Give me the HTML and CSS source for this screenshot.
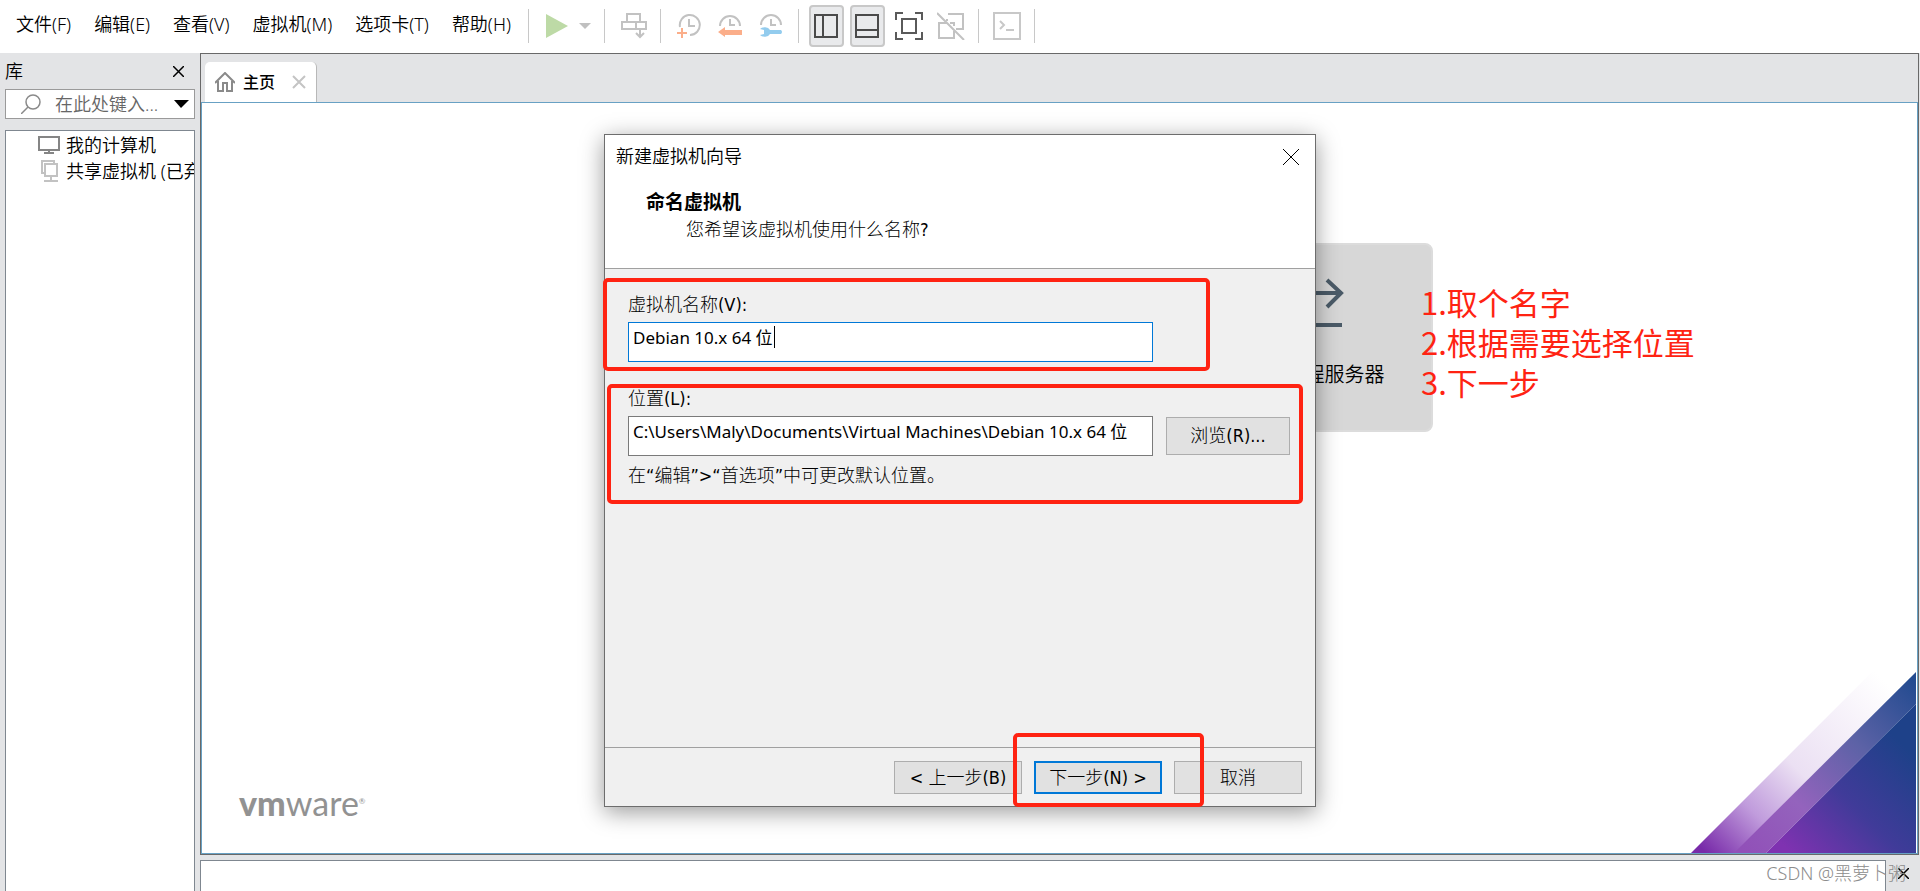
FILE: index.html
```
<!DOCTYPE html>
<html lang="zh-CN">
<head>
  <meta charset="UTF-8">
  <title>新建虚拟机向导</title>
  <link rel="stylesheet" href="styles.css">
</head>
<body>
  <header class="menubar">
    <nav class="menus">
      <button>文件(F)</button>
      <button>编辑(E)</button>
      <button>查看(V)</button>
      <button>虚拟机(M)</button>
      <button>选项卡(T)</button>
      <button>帮助(H)</button>
    </nav>
    <div class="tools play-tools">
      <button aria-label="启动"><svg width="22" height="24"><path d="M0 0L22 12L0 24Z" fill="#bddaa6"/></svg></button>
      <button aria-label="电源选项"><svg width="12" height="6"><path d="M0 0H12L6 6Z" fill="#c0c0c0"/></svg></button>
    </div>
    <div class="tools send-tools">
      <button aria-label="发送按键">
        <svg width="26" height="26" fill="none" stroke="#c2c2c2" stroke-width="2">
          <path d="M6 8V1H19V8M1 9H25V16H1ZM15 9V16M19 16V24M15 20L19 24L23 20"/>
        </svg>
      </button>
    </div>
    <!-- 快照 -->
    <div class="tools snap-tools">
      <button aria-label="拍摄快照">
        <svg width="24" height="26" fill="none" stroke="#c2c2c2" stroke-width="2">
          <path d="M3 14A10 10 0 1 1 13 22M12 6V13H18"/><path d="M5 15V25M0 20H10" stroke="#fbae8a"/>
        </svg>
      </button>
      <button aria-label="恢复快照">
        <svg width="24" height="26" fill="none" stroke="#c2c2c2" stroke-width="2">
          <path d="M2 13A10 10 0 1 1 22 13M12 6V12H17"/><path d="M0 19L7 14V17H24V22H7V24Z" fill="#fbae8a" stroke="none"/>
        </svg>
      </button>
      <button aria-label="管理快照">
        <svg width="24" height="26" fill="none" stroke="#c2c2c2" stroke-width="2">
          <path d="M2 12A10 10 0 1 1 22 12M12 6V12H17"/><path d="M1 16L5 17V21L1 22A6 5 0 0 0 11 21H22Q24 19 22 17H11A6 5 0 0 0 1 16Z" fill="#93ccee" stroke="none"/>
        </svg>
      </button>
    </div>
    <div class="tools view-tools">
      <button class="pressed" aria-label="显示库"><svg width="24" height="24" fill="none" stroke="#4a4a4a" stroke-width="2"><path d="M1 1H23V23H1ZM9 1V23"/></svg></button>
      <button class="pressed" aria-label="显示缩略图"><svg width="24" height="24" fill="none" stroke="#4a4a4a" stroke-width="2"><path d="M1 1H23V23H1ZM1 16H23"/></svg></button>
      <button aria-label="全屏"><svg width="28" height="28" fill="none" stroke="#5a5a5a" stroke-width="2"><path d="M1 8V1H8M20 1H27V8M27 20V27H20M8 27H1V20M7 7H21V21H7Z"/></svg></button>
      <button aria-label="Unity"><svg width="28" height="28" fill="none" stroke="#c2c2c2" stroke-width="2"><path d="M11 2H26V17H19M10 11H2V26H17V19M10 9V7M13 11H17V14M0 1L27 28"/></svg></button>
    </div>
    <div class="tools console-tools">
      <button aria-label="控制台"><svg width="28" height="28" fill="none" stroke="#c8c8c8" stroke-width="2"><path d="M1 1H27V27H1ZM7 9L11 13L7 17M13 18H21"/></svg></button>
    </div>
  </header>

  <div class="workspace">
    <aside class="library">
      <div class="library-head">
        <span>库</span>
        <button aria-label="关闭库"><svg width="11" height="11" stroke="#000" stroke-width="1.5"><path d="M0 0L11 11M11 0L0 11"/></svg></button>
      </div>
      <div class="search">
        <svg width="20" height="20" fill="none" stroke="#8a8a8a" stroke-width="1.5"><circle cx="12" cy="8" r="7"/><path d="M7 13L0 20"/></svg>
        <input type="text" aria-label="搜索" placeholder="在此处键入...">
        <button aria-label="搜索选项"><svg width="15" height="8"><path d="M0 0H15L7 8Z"/></svg></button>
      </div>
      <ul class="tree">
        <li>
          <svg width="22" height="18" fill="none" stroke="#858585" stroke-width="2"><path d="M1 1H21V14H1ZM11 14V17M6 17H16"/></svg>
          我的计算机
        </li>
        <li>
          <svg width="22" height="22" fill="none" stroke="#c2c2c2" stroke-width="2"><path d="M7 4H19V16H7ZM7 13H4V1H16V4M13 16V20M6 21H20"/></svg>
          共享虚拟机 (已弃用)
        </li>
      </ul>
    </aside>

    <div class="right">
      <main class="main">
        <div class="tabs">
          <div class="tab">
            <svg width="20" height="20" fill="none" stroke="#8a8a8a" stroke-width="2"><path d="M0 11L10 1L20 11M3 9V19H8V11H12V19H17V9"/></svg>
            <span>主页</span>
            <button aria-label="关闭标签"><svg width="14" height="14" stroke="#c4c4c4" stroke-width="2"><path d="M1 1L13 13M13 1L1 13"/></svg></button>
          </div>
        </div>
        <div class="home">
          <div class="cards">
            <button class="card">
              <svg width="60" height="50" fill="none" stroke="#4b5b68" stroke-width="4"><path d="M2 15H56M42 2L56 15L42 29M2 47H57"/></svg>
              <span>连接远程服务器</span>
            </button>
          </div>
          <div class="home-foot">
            <div class="logo"><b>vm</b>ware<sup>®</sup></div>
            <svg class="corner" width="240" height="212">
              <defs>
                <linearGradient id="fade" gradientUnits="userSpaceOnUse" x1="30" y1="212" x2="205" y2="37">
                  <stop offset="0" stop-color="#782aa9"/>
                  <stop offset=".25" stop-color="#c09bdc"/>
                  <stop offset=".5" stop-color="#ebe0f3"/>
                  <stop offset="1" stop-color="#fff"/>
                </linearGradient>
                <linearGradient id="band" gradientUnits="userSpaceOnUse" x1="70" y1="212" x2="240" y2="42">
                  <stop offset="0" stop-color="#9150b8"/>
                  <stop offset=".3" stop-color="#9463bd"/>
                  <stop offset=".65" stop-color="#5c62a6"/>
                  <stop offset="1" stop-color="#234b90"/>
                </linearGradient>
                <linearGradient id="deep" gradientUnits="userSpaceOnUse" x1="115" y1="212" x2="225" y2="102">
                  <stop offset="0" stop-color="#7f32b1"/>
                  <stop offset=".5" stop-color="#403b99"/>
                  <stop offset="1" stop-color="#1e4189"/>
                </linearGradient>
              </defs>
              <path d="M15 212L227 0H240V31L59 212Z" fill="url(#fade)"/>
              <path d="M58 212L240 31V63L90 212Z" fill="url(#band)"/>
              <path d="M90 212L240 63V212Z" fill="url(#deep)"/>
            </svg>
          </div>
        </div>
      </main>
      <div class="thumbs">
        <div class="thumbs-list"></div>
        <button aria-label="关闭缩略图"><svg width="11" height="11" stroke="#000" stroke-width="1.5"><path d="M0 0L11 11M11 0L0 11"/></svg></button>
      </div>
    </div>
  </div>

  <div class="overlay">
    <form class="dialog">
      <div class="dialog-head">
        <div class="titlebar">
          <span>新建虚拟机向导</span>
          <button type="button" aria-label="关闭"><svg width="16" height="16" stroke="#000"><path d="M0 0L16 16M16 0L0 16"/></svg></button>
        </div>
        <h1>命名虚拟机</h1>
        <p>您希望该虚拟机使用什么名称?</p>
      </div>
      <div class="dialog-body">
        <label for="vm-name">虚拟机名称(V):</label>
        <div class="row name-row">
          <input type="text" id="vm-name" class="active" value="Debian 10.x 64 位">
          <span class="caret"></span>
        </div>
        <label for="vm-path">位置(L):</label>
        <div class="row">
          <input type="text" id="vm-path" value="C:\Users\Maly\Documents\Virtual Machines\Debian 10.x 64 位">
          <button type="button" class="btn browse">浏览(R)...</button>
        </div>
        <p class="hint">在“编辑”&gt;“首选项”中可更改默认位置。</p>
      </div>
      <div class="dialog-foot">
        <button type="button" class="btn">&lt; 上一步(B)</button>
        <button type="submit" class="btn default">下一步(N) &gt;</button>
        <button type="button" class="btn">取消</button>
      </div>

      <!-- 标注 -->
      <div class="mark mark-name"></div>
      <div class="mark mark-path"></div>
      <div class="mark mark-next"></div>
      <div class="note">1.取个名字<br>2.根据需要选择位置<br>3.下一步</div>
    </form>
  </div>
  <div class="watermark">CSDN @黑萝卜粥</div>
</body>
</html>
```
FILE: styles.css
```
* { box-sizing: border-box; }
body {
  margin: 0; height: 100vh; overflow: hidden; position: relative;
  display: flex; flex-direction: column;
  font: 350 18px/24px "Noto Sans", "Noto Sans CJK SC", sans-serif; color: #000; background: #e3e4e6;
}
button { font: inherit; color: inherit; border: 0; padding: 0; background: none; white-space: nowrap; }
input { font: inherit; color: inherit; min-width: 0; outline: 0; border-radius: 0; }
svg { display: block; flex: none; }
h1, p, ul { margin: 0; padding: 0; }

/* menu + toolbar */
.menubar { flex: none; height: 53px; display: flex; align-items: center; background: #fff; padding: 0 0 1px 16px; }
.menus { display: flex; gap: 23px; margin-right: 17px; padding-bottom: 4px; }
.tools { display: flex; align-items: center; height: 34px; border-left: 1px solid #c8c8c8; }
.play-tools { padding: 0 13px 0 17px; gap: 11px; }
.send-tools { padding: 0 13px 0 16px; }
.snap-tools { padding: 0 15px 0 16px; gap: 17px; }
.view-tools { padding: 0 13px 0 10px; gap: 14px; }
.console-tools { padding: 0 13px 0 14px; border-right: 1px solid #c8c8c8; }
.pressed { display: grid; place-items: center; width: 35px; height: 42px; border: 2px solid #c8c8c8; border-radius: 4px; background: #e9eaec; }
.pressed + .pressed { margin-left: -8px; }
.pressed + button:not(.pressed) { margin-left: -4px; }

.workspace { flex: 1; min-height: 0; display: flex; }

/* library */
.library { width: 200px; flex: none; display: flex; flex-direction: column; padding: 0 5px; }
.library-head { height: 36px; display: flex; align-items: center; justify-content: space-between; padding-right: 11px; }
.search { height: 30px; display: flex; align-items: center; gap: 14px; background: #fff; border: 1px solid #9a9a9a; padding: 0 5px 0 15px; }
.search input { flex: 1; border: 0; padding: 0; background: none; }
.search input::placeholder { color: #666; opacity: 1; }
.tree { flex: 1; margin-top: 11px; border: 1px solid #7f8790; border-bottom: 0; background: #fff; list-style: none; padding: 1px 0 0 32px; overflow: hidden; }
.tree li { display: flex; align-items: center; gap: 6px; height: 26px; white-space: nowrap; }

/* main pane */
.right { flex: 1; min-width: 0; display: flex; flex-direction: column; }
.main { flex: 1; min-height: 0; margin-right: 1px; border: 1px solid #696969; display: flex; flex-direction: column; }
.tabs { height: 48px; flex: none; display: flex; align-items: flex-end; padding-left: 4px; }
.tab { height: 40px; display: flex; align-items: center; gap: 8px; padding: 0 10px; background: #fff; border: 1px solid #b8b8b8; border-width: 0 1px 0 0; border-radius: 5px 5px 0 0; font-size: 16px; font-weight: 500; }
.tab button { margin-left: 9px; }
.home { flex: 1; border: 1px solid #68a1c4; background: #fff; display: flex; flex-direction: column; align-items: center; justify-content: space-between; padding-top: 140px; }
.cards { width: 746px; display: flex; justify-content: flex-end; }
.card { width: 236px; height: 189px; border: 2px solid #dcdcdc; border-radius: 8px; background: #d7d7d7; display: flex; flex-direction: column; align-items: center; gap: 35px; padding-top: 33px; font-size: 20px; }
.home-foot { align-self: stretch; display: flex; justify-content: space-between; align-items: flex-end; padding-left: 37px; padding-right: 1px; }
.logo { font: 34px/40px Lato, sans-serif; color: #929292; padding-bottom: 30px; }
.logo b { font-weight: 900; }
.logo sup { font-size: 8px; line-height: 8px; vertical-align: 12px; }
.thumbs { height: 31px; margin-top: 5px; flex: none; display: flex; }
.thumbs-list { flex: 1; background: #fff; border: 1px solid #7f8790; border-bottom: 0; }
.thumbs button { padding: 0 11px 5px 12px; }

/* wizard */
.overlay { position: absolute; inset: 0; display: flex; justify-content: center; align-items: flex-start; padding-top: 134px; }
.dialog { position: relative; width: 712px; height: 673px; display: flex; flex-direction: column; border: 1px solid #6d6d6d; background: #f0f0f0; box-shadow: 0 5px 22px rgba(0, 0, 0, .4); font-family: "DejaVu Sans Condensed", "Noto Sans CJK SC", sans-serif; font-weight: 300; }
.dialog-head { height: 134px; background: #fff; border-bottom: 1px solid #a0a0a0; }
.titlebar { display: flex; justify-content: space-between; align-items: center; height: 43px; padding: 0 16px 0 11px; font-weight: 350; }
.dialog h1 { font-size: 19px; line-height: 24px; font-weight: 700; margin: 12px 0 4px 41px; }
.dialog-head p { margin-left: 81px; }
.dialog-body { flex: 1; padding: 24px 25px 0 23px; }
.dialog-body label { display: block; height: 29px; }
.row { display: flex; gap: 13px; align-items: center; position: relative; margin-bottom: 25px; }
.row input { width: 525px; height: 40px; border: 1px solid #7a7a7a; background: #fff; padding: 0 4px 11px; font-family: "Noto Sans", "Noto Sans CJK SC", sans-serif; font-size: 17px; font-weight: 400; }
.row input.active { border-color: #0078d7; }
.caret { position: absolute; left: 146px; top: 4px; width: 1px; height: 22px; background: #000; }
.hint { margin-top: -17px; }
.btn { width: 128px; height: 33px; border: 1px solid #adadad; background: #e1e1e1; }
.browse { width: 124px; height: 38px; }
.btn.default { border: 2px solid #0078d7; }
.dialog-foot { height: 59px; border-top: 1px solid #a0a0a0; display: flex; justify-content: flex-end; gap: 12px; padding: 13px 13px 0 0; }

/* annotations */
.mark { position: absolute; border: 4px solid #ff2312; border-radius: 5px; pointer-events: none; }
.mark-name { left: -2px; top: 143px; width: 607px; height: 93px; }
.mark-path { left: 2px; top: 249px; width: 696px; height: 120px; }
.mark-next { left: 408px; top: 598px; width: 191px; height: 74px; }
.note { position: absolute; left: 816px; top: 147px; font: 400 31px/40px "Noto Sans CJK SC", sans-serif; color: #ff2312; white-space: nowrap; }
.watermark { position: absolute; right: 14px; bottom: 6px; font-size: 18px; font-weight: 300; color: #8c8c8c; }
```
